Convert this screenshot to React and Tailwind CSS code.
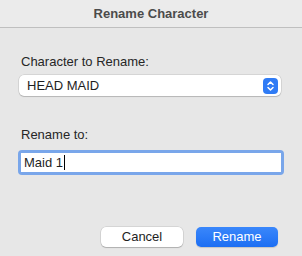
import React, { useState } from 'react';

const font = { fontFamily: '"Liberation Sans", Arial, sans-serif' };

const App = () => {
    const [name, setName] = useState('Maid 1');

    return (
        <div className="w-[302px] h-[256px] bg-[#e7e7e7] text-[13px] text-[#262626] overflow-hidden" style={font}>
            {/* Title bar */}
            <div className="h-[28px] bg-[#ebebeb] border-b border-[#bfbfbf] flex items-center justify-center">
                <span className="font-bold text-[#4b4b4b] text-[13px]">Rename Character</span>
            </div>

            <div className="px-[19px] pt-[26px]">
                <div className="h-[16px] leading-[16px] px-[2px]">Character to Rename:</div>

                {/* Popup button */}
                <div className="mt-[5px] h-[21px] w-[262px] bg-white rounded-[5px] shadow-[0_0_0_0.5px_rgba(0,0,0,0.15),0_1px_1px_rgba(0,0,0,0.15)] flex items-center justify-between pl-[8px] pr-[3px]">
                    <span className="text-[13px] text-[#1e1e1e]">HEAD MAID</span>
                    <div className="w-[15px] h-[16px] rounded-[4px] bg-[#2f7bf5] flex items-center justify-center">
                        <svg width="9" height="12" viewBox="0 0 9 12" fill="none" stroke="white" strokeWidth="1.5" strokeLinecap="round" strokeLinejoin="round">
                            <path d="M2 4.5 L4.5 2 L7 4.5" />
                            <path d="M2 7.5 L4.5 10 L7 7.5" />
                        </svg>
                    </div>
                </div>

                <div className="mt-[31px] h-[16px] leading-[16px] px-[2px]">Rename to:</div>

                {/* Text field with focus ring */}
                <div className="mt-[7px] -ml-[1px] h-[25px] w-[266px] rounded-[4px] bg-[#79a6ea] p-[3px]">
                    <div className="h-full w-full bg-white flex items-center pl-[3px]">
                        <span className="text-[13px] text-[#1e1e1e]">{name}</span>
                        <span className="ml-[1px] w-[1px] h-[15px] bg-black"></span>
                    </div>
                </div>

                {/* Buttons */}
                <div className="mt-[52px] flex justify-end gap-[13px] pr-[5px]">
                    <button
                        className="w-[82px] h-[20px] bg-white rounded-[5px] text-[13px] text-[#1e1e1e] shadow-[0_0_0_0.5px_rgba(0,0,0,0.15),0_1px_1px_rgba(0,0,0,0.18)]"
                        style={font}
                    >
                        Cancel
                    </button>
                    <button
                        className="w-[82px] h-[20px] rounded-[5px] text-[13px] text-white bg-gradient-to-b from-[#3a87fb] to-[#1b6ef3] shadow-[0_1px_1px_rgba(0,0,0,0.15)]"
                        style={font}
                        onClick={() => setName(name)}
                    >
                        Rename
                    </button>
                </div>
            </div>
        </div>
    );
};

export default App;
